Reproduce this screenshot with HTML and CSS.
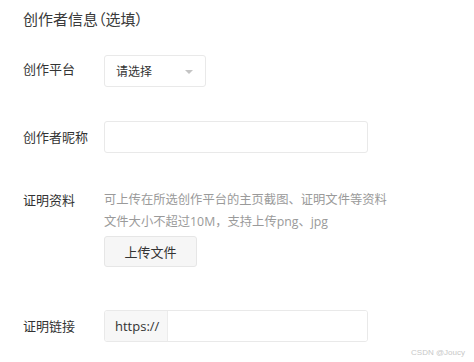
FILE: index.html
```html
<!DOCTYPE html>
<html lang="zh-CN">
<head>
    <meta charset="UTF-8">
    <title>创作者信息</title>
    <link rel="stylesheet" href="styles.css">
</head>
<body>
    <h2 class="title">创作者信息（选填）</h2>

    <div class="form">
        <!-- 创作平台 -->
        <div class="row row-platform">
            <label class="label">创作平台</label>
            <div class="select">
                <span>请选择</span>
                <span class="arrow"></span>
            </div>
        </div>

        <!-- 昵称 -->
        <div class="row row-nick">
            <label class="label">创作者昵称</label>
            <input class="input" type="text">
        </div>

        <!-- 证明资料 -->
        <div class="row row-proof">
            <label class="label">证明资料</label>
            <div class="proof-box">
                <p class="tip">可上传在所选创作平台的主页截图、证明文件等资料</p>
                <p class="tip">文件大小不超过10M，支持上传png、jpg</p>
                <button class="upload-btn">上传文件</button>
            </div>
        </div>

        <!-- 证明链接 -->
        <div class="row row-link">
            <label class="label">证明链接</label>
            <div class="input-group">
                <span class="prefix">https://</span>
                <input class="group-input" type="text">
            </div>
        </div>
    </div>

    <div class="watermark">CSDN @Joucy</div>
</body>
</html>
```

FILE: styles.css
```css
* {
    margin: 0;
    padding: 0;
    box-sizing: border-box;
}

body {
    position: relative;
    width: 474px;
    height: 362px;
    padding-left: 23px;
    font-family: "Open Sans", "Noto Sans CJK SC", sans-serif;
    color: #333;
    background: #fff;
    overflow: hidden;
}

.title {
    margin-top: 7px;
    font-size: 15px;
    font-weight: normal;
    line-height: 24px;
    color: #3a3a3a;
    font-feature-settings: "palt";
}

.form {
    margin-top: 24px;
}

.row {
    display: flex;
    align-items: center;
}

.label {
    width: 81px;
    font-size: 13px;
    line-height: 22px;
    color: #333;
}

.row-platform .label {
    margin-top: -4px;
}

/* 下拉框 */
.select {
    display: flex;
    align-items: center;
    justify-content: space-between;
    width: 102px;
    height: 32px;
    padding: 0 12px 0 11px;
    border: 1px solid #e9e9e9;
    border-radius: 3px;
    font-size: 12px;
    color: #333;
}

.arrow {
    width: 0;
    height: 0;
    border-left: 4px solid transparent;
    border-right: 4px solid transparent;
    border-top: 4px solid #c4c4c4;
    margin-top: 1px;
}

.input {
    width: 264px;
    height: 32px;
    border: 1px solid #e9e9e9;
    border-radius: 3px;
    outline: none;
}

.row-nick {
    margin-top: 34px;
}

/* 证明资料 */
.row-proof {
    align-items: flex-start;
    margin-top: 36px;
}

.tip {
    font-size: 12.3px;
    line-height: 22px;
    color: #9a9a9a;
}

.upload-btn {
    display: block;
    width: 93px;
    height: 31px;
    margin-top: 3px;
    background: #f6f6f6;
    border: 1px solid #e6e6e6;
    border-radius: 3px;
    font-family: inherit;
    font-size: 13px;
    color: #333;
}

/* 证明链接 */
.row-link {
    margin-top: 43px;
}

.input-group {
    display: flex;
    width: 264px;
    height: 32px;
    border: 1px solid #e9e9e9;
    border-radius: 3px;
    overflow: hidden;
}

.prefix {
    display: flex;
    align-items: center;
    width: 63px;
    padding-left: 10px;
    background: #f7f7f7;
    border-right: 1px solid #ececec;
    font-size: 13px;
    color: #333;
}

.group-input {
    flex: 1;
    border: none;
    outline: none;
}

.watermark {
    position: absolute;
    right: 9px;
    bottom: 5px;
    font-family: "Liberation Sans", sans-serif;
    font-size: 8px;
    color: #c8c8c8;
}
```
